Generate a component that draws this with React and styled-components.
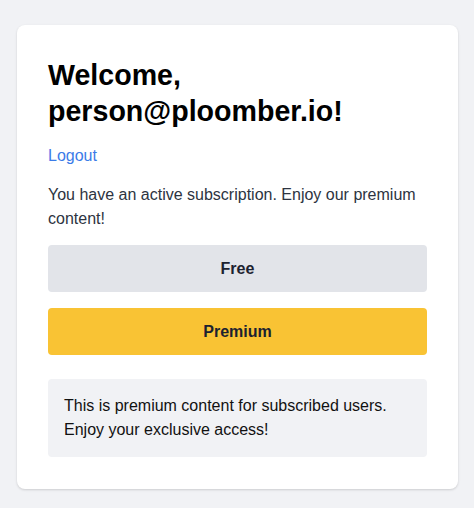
import React from 'react';
import styled, { createGlobalStyle } from 'styled-components';

const GlobalStyle = createGlobalStyle`
  html, body {
    margin: 0;
    padding: 0;
    background: #f1f2f5;
  }
  body {
    font-family: "Liberation Sans", Arial, Helvetica, sans-serif;
    -webkit-font-smoothing: antialiased;
  }
  * {
    box-sizing: border-box;
  }
`;

export default function App() {
  const email = 'person@ploomber.io';

  return (
    <Page>
      <GlobalStyle />
      <Card>
        <Title>Welcome, {email}!</Title>
        <LogoutLink href="#">Logout</LogoutLink>
        <Message>You have an active subscription. Enjoy our premium content!</Message>
        <Plans>
          <PlanButton>Free</PlanButton>
          <PlanButton premium>Premium</PlanButton>
        </Plans>
        <Content>
          This is premium content for subscribed users. Enjoy your exclusive access!
        </Content>
      </Card>
    </Page>
  );
}

const Page = styled.div`
  min-height: 508px;
  padding: 25px 16px 18px 17px;
  background: #f1f2f5;
`;
const Card = styled.div`
  background: #fff;
  border-radius: 8px;
  box-shadow: 0 1px 3px rgba(0, 0, 0, 0.1), 0 1px 2px rgba(0, 0, 0, 0.06);
  padding: 32px 31px 32px 31px;
  display: flex;
  flex-direction: column;
`;
const Title = styled.h1`
  margin: 0 0 15px;
  font-size: 28.6px;
  line-height: 36px;
  font-weight: bold;
  color: #000;
`;
const LogoutLink = styled.a`
  align-self: flex-start;
  color: #3b7be8;
  font-size: 16px;
  line-height: 24px;
  text-decoration: none;
  margin-bottom: 15px;
`;
const Message = styled.p`
  margin: 0 0 14px;
  font-size: 16px;
  line-height: 24px;
  color: #2d3441;
`;
const Plans = styled.div`
  display: flex;
  flex-direction: column;
  gap: 16px;
  margin-bottom: 24px;
`;
const PlanButton = styled.button`
  height: 47px;
  border: none;
  border-radius: 4px;
  background: ${p => (p.premium ? '#f9c334' : '#e2e4e9')};
  color: #1c2230;
  font-family: inherit;
  font-size: 16px;
  font-weight: bold;
  cursor: pointer;
`;
const Content = styled.div`
  background: #f1f2f5;
  border-radius: 4px;
  padding: 15px 16px;
  font-size: 16px;
  line-height: 24px;
  color: #111;
`;
